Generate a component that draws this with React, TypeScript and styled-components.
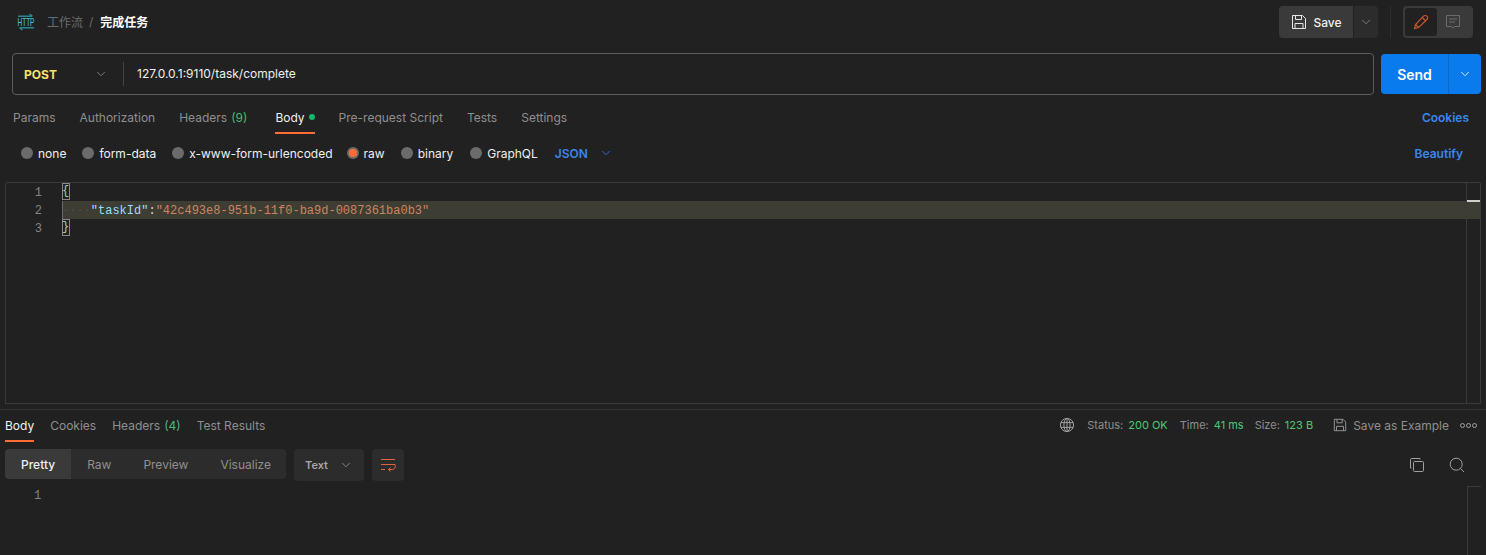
import React from 'react';
import styled, { createGlobalStyle } from 'styled-components';
import { ChevronDown } from 'lucide-react';

const GlobalStyle = createGlobalStyle`
  html, body {
    margin: 0;
    height: 100%;
    overflow: hidden;
    background: #212121;
  }
  body {
    font-family: Inter, "Noto Sans CJK SC", sans-serif;
    font-size: 12px;
    color: #a6a6a6;
  }
`;

const HttpIcon = () => (
  <svg width="18" height="18" viewBox="0 0 18 18" fill="none">
    <path d="M1 3.2H15M12.5 1L15.5 3.2" stroke="#2b8794" strokeWidth="1.4" />
    <path d="M2.5 14.8H17M5.5 17L2.5 14.8" stroke="#2b8794" strokeWidth="1.4" />
    <text transform="translate(0.5 12.9) scale(0.65 1)" fontFamily="Liberation Sans" fontSize="10" fill="#4cc4d4">
      HTTP
    </text>
  </svg>
);

const SaveIcon = ({ color = '#e6e6e6', size = 16 }: { color?: string; size?: number }) => (
  <svg width={size} height={size} viewBox="0 0 16 16" fill="none" stroke={color} strokeWidth="1">
    <path d="M1.5 1.5H11.5L14.5 4.5V14.5H1.5Z" />
    <path d="M4.5 1.5V5.5H10.5V1.5" />
    <path d="M4 14.5V9.5H12V14.5" />
  </svg>
);

const PencilIcon = () => (
  <svg width="16" height="16" viewBox="0 0 16 16" fill="none" stroke="#d2572c" strokeWidth="1.1">
    <path d="M1.5 14.5L2.5 10.5L10.5 2.2C11.5 1.2 13 1.2 14 2.2C15 3.2 14.8 4.6 13.9 5.5L5.6 13.6Z" />
    <path d="M9.3 3.5L12.7 6.8" />
    <path d="M2.6 10.5L5.5 13.5" />
  </svg>
);

const CommentIcon = () => (
  <svg width="16" height="16" viewBox="0 0 16 16" fill="none" stroke="#6b6b6b" strokeWidth="1">
    <path d="M1.5 1.5H14.5V12.5H9.5L8 14L6.5 12.5H1.5Z" />
    <path d="M4 5H12M4 8H10" />
  </svg>
);

const GlobeIcon = () => (
  <svg width="16" height="16" viewBox="0 0 16 16" fill="none" stroke="#a0a0a0" strokeWidth="1">
    <circle cx="8" cy="8" r="6.6" />
    <ellipse cx="8" cy="8" rx="3.1" ry="6.6" />
    <path d="M1.8 5.6H14.2M1.8 10.4H14.2M8 1.4V14.6" />
  </svg>
);

const WrapIcon = () => (
  <svg width="16" height="14" viewBox="0 0 16 14" fill="none" stroke="#e0653a" strokeWidth="1">
    <path d="M1 1.5H15M1 6.5H15M1 11.5H5" />
    <path d="M15 6.5C15.8 8 15 11.5 12.5 11.5H8.5M10.5 9.5L8.5 11.5L10.5 13.5" />
  </svg>
);

const CopyIcon = () => (
  <svg width="16" height="16" viewBox="0 0 16 16" fill="none" stroke="#a0a0a0" strokeWidth="1">
    <rect x="4.5" y="4.5" width="10" height="10" rx="1" />
    <path d="M2.5 11H1.5V2.5C1.5 2 2 1.5 2.5 1.5H11V2.5" />
  </svg>
);

const SearchIcon = () => (
  <svg width="16" height="16" viewBox="0 0 16 16" fill="none" stroke="#a0a0a0" strokeWidth="1">
    <circle cx="7.2" cy="7.2" r="6" />
    <path d="M11.6 11.6L15 15" />
  </svg>
);

const Page = styled.div`
  height: 555px;
  display: flex;
  flex-direction: column;
  background: #212121;
`;

const Header = styled.header`
  height: 44px;
  padding: 6px 13px 0 17px;
  display: flex;
  align-items: flex-start;
  box-sizing: content-box;
`;

const Breadcrumb = styled.div`
  height: 32px;
  flex: 1;
  display: flex;
  align-items: center;
  font-size: 12px;
  & > span {
    margin-bottom: 2px;
  }
`;

const Parent = styled.span`
  margin-left: 12px;
  color: #6b6b6b;
`;

const Slash = styled.span`
  margin: 0 6px;
  color: #6b6b6b;
`;

const Current = styled.span`
  margin-left: 1px;
  color: #ffffff;
  font-weight: 600;
`;

const SaveGroup = styled.div`
  height: 32px;
  display: flex;
  border-radius: 4px;
  overflow: hidden;
`;

const SaveButton = styled.div`
  width: 74px;
  padding-left: 1px;
  box-sizing: border-box;
  background: #3a3a3a;
  display: flex;
  align-items: center;
  justify-content: center;
  gap: 6px;
  color: #f0f0f0;
  font-weight: 500;
`;

const SaveCaret = styled.div`
  width: 24px;
  margin-left: 1px;
  background: #2c2c2c;
  display: flex;
  align-items: center;
  justify-content: center;
  color: #a0a0a0;
`;

const HeaderRule = styled.div`
  width: 1px;
  height: 32px;
  margin: 0 12px;
  background: #2e2e2e;
`;

const ModeSwitch = styled.div`
  width: 70px;
  height: 32px;
  padding: 2px;
  box-sizing: border-box;
  background: #3a3a3a;
  border-radius: 4px;
  display: flex;
`;

const ModeItem = styled.div<{ $active?: boolean }>`
  width: 32px;
  border-radius: 3px;
  background: ${p => (p.$active ? '#212121' : 'transparent')};
  display: flex;
  align-items: center;
  justify-content: center;
`;

const UrlRow = styled.div`
  height: 42px;
  margin: 3px 5px 0 12px;
  display: flex;
  align-items: center;
  gap: 7px;
`;

const UrlBox = styled.div`
  flex: 1;
  align-self: stretch;
  box-sizing: border-box;
  border: 1px solid #5c5c5c;
  border-radius: 4px;
  display: flex;
  align-items: center;
`;

const Method = styled.div`
  width: 111px;
  padding: 0 11px;
  box-sizing: border-box;
  display: flex;
  align-items: center;
  justify-content: space-between;
  border-right: 1px solid #444444;
  height: 24px;
  color: #f7e26b;
  font-weight: 700;
  font-size: 12px;
  & svg {
    color: #a0a0a0;
    margin-right: 4px;
  }
`;

const UrlText = styled.div`
  margin: 0 0 2px 13px;
  color: #f0f0f0;
  font-size: 12px;
`;

const SendGroup = styled.div`
  height: 40px;
  display: flex;
  border-radius: 4px;
  overflow: hidden;
  background: #097bed;
  color: #ffffff;
`;

const SendButton = styled.div`
  width: 67px;
  border-right: 1px solid #0a68c4;
  display: flex;
  align-items: center;
  justify-content: center;
  font-size: 14px;
  font-weight: 600;
`;

const SendCaret = styled.div`
  width: 32px;
  display: flex;
  align-items: center;
  justify-content: center;
`;

const TabRow = styled.div`
  height: 34px;
  margin-top: 5px;
  padding: 0 17px 0 13px;
  display: flex;
  gap: 24px;
`;

const Tab = styled.div<{ $active?: boolean; $extra?: number }>`
  height: 34px;
  box-sizing: border-box;
  display: flex;
  align-items: center;
  gap: 4px;
  margin-right: ${p => p.$extra ?? 0}px;
  color: ${p => (p.$active ? '#f0f0f0' : '#8f8f8f')};
  border-bottom: 2px solid ${p => (p.$active ? '#ff6c37' : 'transparent')};
  padding-top: 2px;
`;

const Count = styled.span`
  color: #49b977;
`;

const Dot = styled.span`
  width: 6px;
  height: 6px;
  border-radius: 50%;
  background: #12b76a;
`;

const LinkText = styled.div`
  margin-left: auto;
  height: 34px;
  display: flex;
  align-items: center;
  color: #3a86f0;
  font-weight: 600;
`;

const BodyTypes = styled.div`
  height: 40px;
  padding: 0 23px 2px 21px;
  box-sizing: border-box;
  display: flex;
  align-items: center;
`;

const RadioItem = styled.div<{ $gap: number }>`
  display: flex;
  align-items: center;
  gap: 5px;
  margin-right: ${p => p.$gap}px;
  color: #f0f0f0;
`;

const Radio = styled.span<{ $on?: boolean }>`
  width: 12px;
  height: 12px;
  border-radius: 50%;
  background: #6b6b6b;
  display: flex;
  align-items: center;
  justify-content: center;
  &::after {
    content: '';
    width: 8px;
    height: 8px;
    border-radius: 50%;
    background: ${p => (p.$on ? '#ff6c37' : 'transparent')};
  }
`;

const JsonSelect = styled.div`
  display: flex;
  align-items: center;
  gap: 11px;
  margin-left: 1px;
  color: #3a86f0;
  font-weight: 600;
`;

const Editor = styled.div`
  position: relative;
  height: 222px;
  margin: 8px 5px 0 5px;
  box-sizing: border-box;
  border: 1px solid #3a3a3a;
  border-radius: 2px 2px 0 0;
  padding-top: 1px;
  display: flex;
  font-family: "Liberation Mono", monospace;
  font-size: 12px;
  line-height: 18px;
`;

const Gutter = styled.div`
  width: 36px;
  text-align: right;
  color: #858585;
  flex-shrink: 0;
`;

const Code = styled.div`
  flex: 1;
  margin: -1px 0 0 20px;
`;

const CodeLine = styled.div<{ $current?: boolean }>`
  height: 18px;
  line-height: 20px;
  white-space: pre;
  background: ${p => (p.$current ? '#3d3d33' : 'transparent')};
  box-shadow: ${p => (p.$current ? 'inset 1px 0 0 #6a6a62' : 'none')};
`;

const Brace = styled.span`
  display: block;
  width: 8px;
  height: 17px;
  box-sizing: border-box;
  border: 1px solid #888888;
  line-height: 15px;
  color: #a9cfa0;
  overflow: hidden;
  text-indent: -1px;
`;

const Indent = styled.span`
  color: #4e4e44;
`;

const JsonKey = styled.span`
  color: #9cdcfe;
`;

const Punct = styled.span`
  color: #d4d4d4;
`;

const JsonValue = styled.span`
  color: #cd8460;
`;

// overview ruler, painted over the current line highlight
const Minimap = styled.div`
  position: absolute;
  top: 0;
  right: 0;
  bottom: 0;
  width: 13px;
  border-left: 1px solid #3a3a3a;
  padding-top: 17px;
  &::before {
    content: '';
    display: block;
    height: 2px;
    background: #d0d0c8;
  }
`;

const Divider = styled.div`
  height: 1px;
  margin-top: 5px;
  background: #333333;
`;

const ResponseBar = styled.div`
  height: 31px;
  padding: 0 9px 0 5px;
  display: flex;
  align-items: flex-start;
`;

const ResponseTabs = styled.div`
  display: flex;
  gap: 16px;
`;

const ResponseTab = styled(Tab)`
  height: 32px;
  padding-top: 0;
`;

const Meta = styled.div`
  margin-left: auto;
  height: 30px;
  display: flex;
  align-items: center;
  font-size: 11px;
  color: #8f8f8f;
`;

const MetaItem = styled.span<{ $gap: number }>`
  margin-right: ${p => p.$gap}px;
  & b {
    font-weight: 400;
    color: #4fc775;
    margin-left: 5px;
  }
`;

const MetaGlobe = styled.span`
  display: flex;
  margin-right: 12px;
`;

const SaveExample = styled.div`
  display: flex;
  align-items: center;
  gap: 6px;
  margin-left: 7px;
  margin-right: 11px;
  font-size: 12px;
`;

const More = styled.div`
  display: flex;
  gap: 1px;
`;

const MoreDot = styled.span`
  width: 3px;
  height: 3px;
  border: 1px solid #a0a0a0;
  border-radius: 50%;
`;

const ViewRow = styled.div`
  height: 32px;
  margin-top: 8px;
  padding: 0 21px 0 5px;
  display: flex;
  align-items: flex-start;
`;

const ViewTabs = styled.div`
  width: 281px;
  height: 30px;
  display: flex;
  background: #2c2c2c;
  border-radius: 4px;
  overflow: hidden;
`;

const ViewTab = styled.div<{ $active?: boolean }>`
  padding: 0 16px;
  display: flex;
  align-items: center;
  color: ${p => (p.$active ? '#f0f0f0' : '#8f8f8f')};
  font-weight: ${p => (p.$active ? 500 : 400)};
  background: ${p => (p.$active ? '#3a3a3a' : 'transparent')};
`;

const FormatSelect = styled.div`
  width: 70px;
  height: 32px;
  margin-left: 8px;
  padding: 0 11px;
  box-sizing: border-box;
  background: #2c2c2c;
  border-radius: 4px;
  display: flex;
  align-items: center;
  justify-content: space-between;
  font-size: 11px;
  font-weight: 600;
  color: #a6a6a6;
`;

const WrapButton = styled.div`
  width: 32px;
  height: 32px;
  margin-left: 8px;
  background: #2c2c2c;
  border-radius: 4px;
  display: flex;
  align-items: center;
  justify-content: center;
`;

const ViewTools = styled.div`
  margin-left: auto;
  height: 32px;
  display: flex;
  align-items: center;
  gap: 24px;
`;

const Output = styled.div`
  flex: 1;
  min-height: 0;
  display: flex;
  font-family: "Liberation Mono", monospace;
  font-size: 12px;
  line-height: 18px;
  padding-left: 34px;
`;

const OutputLine = styled.div`
  flex: 1;
  margin-top: 6px;
  color: #858585;
`;

const OutputRail = styled.div`
  width: 13px;
  margin: 5px 5px 0 0;
  border-left: 1px solid #3a3a3a;
  border-top: 1px solid #3a3a3a;
`;

const App = () => (
  <Page>
    <GlobalStyle />
    <Header>
      <Breadcrumb>
        <HttpIcon />
        <Parent>工作流</Parent>
        <Slash>/</Slash>
        <Current>完成任务</Current>
      </Breadcrumb>
      <SaveGroup>
        <SaveButton>
          <SaveIcon />
          Save
        </SaveButton>
        <SaveCaret>
          <ChevronDown size={14} strokeWidth={1.2} />
        </SaveCaret>
      </SaveGroup>
      <HeaderRule />
      <ModeSwitch>
        <ModeItem $active>
          <PencilIcon />
        </ModeItem>
        <ModeItem>
          <CommentIcon />
        </ModeItem>
      </ModeSwitch>
    </Header>

    <UrlRow>
      <UrlBox>
        <Method>
          POST
          <ChevronDown size={14} strokeWidth={1.2} />
        </Method>
        <UrlText>127.0.0.1:9110/task/complete</UrlText>
      </UrlBox>
      <SendGroup>
        <SendButton>Send</SendButton>
        <SendCaret>
          <ChevronDown size={14} strokeWidth={1.4} />
        </SendCaret>
      </SendGroup>
    </UrlRow>

    <TabRow>
      <Tab>Params</Tab>
      <Tab>Authorization</Tab>
      <Tab $extra={4}>
        Headers <Count>(9)</Count>
      </Tab>
      <Tab $active>
        Body <Dot />
      </Tab>
      <Tab>Pre-request Script</Tab>
      <Tab>Tests</Tab>
      <Tab>Settings</Tab>
      <LinkText>Cookies</LinkText>
    </TabRow>

    <BodyTypes>
      <RadioItem $gap={16}>
        <Radio />
        none
      </RadioItem>
      <RadioItem $gap={16}>
        <Radio />
        form-data
      </RadioItem>
      <RadioItem $gap={14}>
        <Radio />
        x-www-form-urlencoded
      </RadioItem>
      <RadioItem $gap={16}>
        <Radio $on />
        raw
      </RadioItem>
      <RadioItem $gap={17}>
        <Radio />
        binary
      </RadioItem>
      <RadioItem $gap={16}>
        <Radio />
        GraphQL
      </RadioItem>
      <JsonSelect>
        JSON
        <ChevronDown size={14} strokeWidth={1.3} />
      </JsonSelect>
      <LinkText>Beautify</LinkText>
    </BodyTypes>

    <Editor>
      <Gutter>
        <div>1</div>
        <div>2</div>
        <div>3</div>
      </Gutter>
      <Code>
        <CodeLine>
          <Brace>{'{'}</Brace>
        </CodeLine>
        <CodeLine $current>
          <Indent>····</Indent>
          <JsonKey>"taskId"</JsonKey>
          <Punct>:</Punct>
          <JsonValue>"42c493e8-951b-11f0-ba9d-0087361ba0b3"</JsonValue>
        </CodeLine>
        <CodeLine>
          <Brace>{'}'}</Brace>
        </CodeLine>
      </Code>
      <Minimap />
    </Editor>

    <Divider />

    <ResponseBar>
      <ResponseTabs>
        <ResponseTab $active>Body</ResponseTab>
        <ResponseTab>Cookies</ResponseTab>
        <ResponseTab>
          Headers <Count>(4)</Count>
        </ResponseTab>
        <ResponseTab>Test Results</ResponseTab>
      </ResponseTabs>
      <Meta>
        <MetaGlobe>
          <GlobeIcon />
        </MetaGlobe>
        <MetaItem $gap={12}>
          Status:<b>200 OK</b>
        </MetaItem>
        <MetaItem $gap={11}>
          Time:<b>41 ms</b>
        </MetaItem>
        <MetaItem $gap={13}>
          Size:<b>123 B</b>
        </MetaItem>
        <SaveExample>
          <SaveIcon color="#a0a0a0" size={14} />
          Save as Example
        </SaveExample>
        <More>
          <MoreDot />
          <MoreDot />
          <MoreDot />
        </More>
      </Meta>
    </ResponseBar>

    <ViewRow>
      <ViewTabs>
        <ViewTab $active>Pretty</ViewTab>
        <ViewTab>Raw</ViewTab>
        <ViewTab>Preview</ViewTab>
        <ViewTab>Visualize</ViewTab>
      </ViewTabs>
      <FormatSelect>
        Text
        <ChevronDown size={14} strokeWidth={1.2} />
      </FormatSelect>
      <WrapButton>
        <WrapIcon />
      </WrapButton>
      <ViewTools>
        <CopyIcon />
        <SearchIcon />
      </ViewTools>
    </ViewRow>

    <Output>
      <OutputLine>1</OutputLine>
      <OutputRail />
    </Output>
  </Page>
);

export default App;
